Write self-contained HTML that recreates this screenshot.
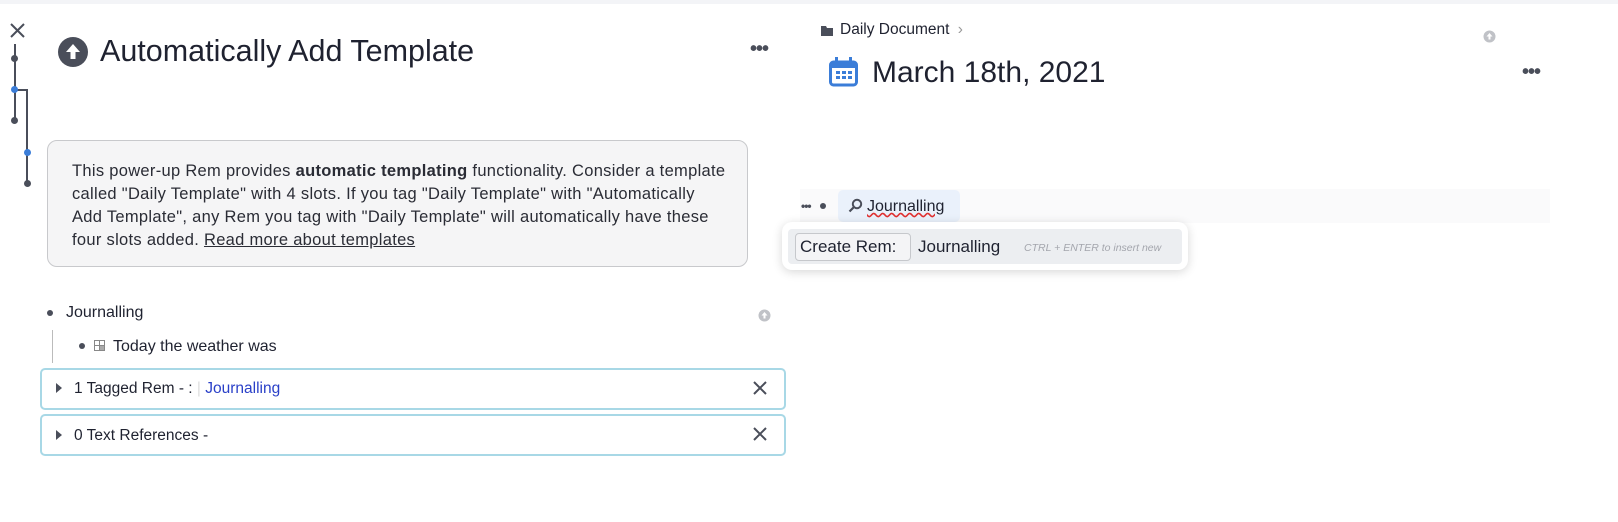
<!DOCTYPE html>
<html><head><style>
body{margin:0;width:1618px;height:522px;background:#fff;font-family:"Liberation Sans",sans-serif;color:#1f2230;position:relative;overflow:hidden}
.a{position:absolute;white-space:nowrap}
.dot{position:absolute;width:7px;height:7px;border-radius:50%;background:#4a4e5a}
.bd{position:absolute;width:7px;height:7px;border-radius:50%;background:#3b7dd8}
</style></head><body>
<div class="a" style="left:0;top:0;width:1618px;height:4px;background:#f3f4f7"></div>
<svg class="a" style="left:9px;top:22px" width="17" height="17"><path d="M2 2L15 15M15 2L2 15" stroke="#4a4e5a" stroke-width="2"/></svg>
<div class="a" style="left:14px;top:44px;width:2px;height:76px;background:#4a4e5a"></div>
<div class="a" style="left:15px;top:89px;width:12px;height:2px;background:#4a4e5a"></div>
<div class="a" style="left:26px;top:89px;width:2px;height:92px;background:#4a4e5a"></div>
<div class="dot" style="left:11px;top:55px"></div>
<div class="bd" style="left:11px;top:86px"></div>
<div class="dot" style="left:11px;top:117px"></div>
<div class="bd" style="left:24px;top:149px"></div>
<div class="dot" style="left:24px;top:180px"></div>
<svg class="a" style="left:58px;top:37px" width="30" height="30"><circle cx="15" cy="15" r="15" fill="#4a4e5a"/><path d="M15 7L8 15h4.5v7h5v-7H22z" fill="#fff"/></svg>
<div class="a" style="left:100px;top:34px;font-size:30.5px">Automatically Add Template</div>
<div class="a" style="left:750px;top:38px;font-size:20px;font-weight:bold;letter-spacing:-1px;color:#4a4e5a">•••</div>
<div class="a" style="left:47px;top:140px;width:699px;height:125px;border:1px solid #c8c9cc;border-radius:10px;background:#f5f5f6"></div>
<div class="a" style="left:72px;top:160px;font-size:16.5px;letter-spacing:.3px;line-height:23px;color:#2a2c35">This power-up Rem provides <b>automatic templating</b> functionality. Consider a template<br>called "Daily Template" with 4 slots. If you tag "Daily Template" with "Automatically<br>Add Template", any Rem you tag with "Daily Template" will automatically have these<br>four slots added. <u>Read more about templates</u></div>
<div class="dot" style="left:47px;top:310px;width:6px;height:6px"></div>
<div class="a" style="left:66px;top:304px;font-size:16px">Journalling</div>
<svg class="a" style="left:758px;top:309px" width="13" height="13"><circle cx="6.5" cy="6.5" r="6" fill="#c0c2c7"/><path d="M6.5 3L3.5 6.5h2v3h2v-3h2z" fill="#fff"/></svg>
<div class="a" style="left:52px;top:330px;width:1px;height:33px;background:#bbb"></div>
<div class="dot" style="left:79px;top:343px;width:6px;height:6px"></div>
<svg class="a" style="left:94px;top:340px" width="11" height="11"><rect x=".5" y=".5" width="10" height="10" fill="none" stroke="#888"/><path d="M5.5 0v11M0 5.5h11" stroke="#888"/><rect x="6" y="6" width="4" height="4" fill="#aaa"/></svg>
<div class="a" style="left:113px;top:338px;font-size:16px">Today the weather was</div>
<div class="a" style="left:40px;top:368px;width:742px;height:38px;border:2px solid #a8d8e6;border-radius:5px"></div>
<div class="a" style="left:56px;top:383px;width:0;height:0;border-left:6px solid #4a4e5a;border-top:5px solid transparent;border-bottom:5px solid transparent"></div>
<div class="a" style="left:74px;top:380px;font-size:15.5px">1 Tagged Rem - : <span style="color:#ddd">|</span> <span style="color:#2a40c8">Journalling</span></div>
<svg class="a" style="left:752px;top:380px" width="16" height="16"><path d="M2 2L14 14M14 2L2 14" stroke="#4a4e5a" stroke-width="2"/></svg>
<div class="a" style="left:40px;top:414px;width:742px;height:38px;border:2px solid #a8d8e6;border-radius:5px"></div>
<div class="a" style="left:56px;top:430px;width:0;height:0;border-left:6px solid #4a4e5a;border-top:5px solid transparent;border-bottom:5px solid transparent"></div>
<div class="a" style="left:74px;top:427px;font-size:15.5px">0 Text References -</div>
<svg class="a" style="left:752px;top:426px" width="16" height="16"><path d="M2 2L14 14M14 2L2 14" stroke="#4a4e5a" stroke-width="2"/></svg>

<svg class="a" style="left:821px;top:25px" width="12" height="11"><path d="M0 1h5l1 2h6v8H0z" fill="#4a4e5a"/></svg>
<div class="a" style="left:840px;top:21px;font-size:15.5px">Daily Document <span style="color:#999;margin-left:4px">›</span></div>
<svg class="a" style="left:1483px;top:30px" width="13" height="13"><circle cx="6.5" cy="6.5" r="6" fill="#c0c2c7"/><path d="M6.5 3L3.5 6.5h2v3h2v-3h2z" fill="#fff"/></svg>
<svg class="a" style="left:829px;top:57px" width="29" height="30"><rect x="1.5" y="5" width="26" height="23" rx="3" fill="none" stroke="#3b7dd8" stroke-width="3"/><rect x="1.5" y="5" width="26" height="6" fill="#3b7dd8"/><rect x="6" y="0" width="3" height="7" fill="#3b7dd8"/><rect x="20" y="0" width="3" height="7" fill="#3b7dd8"/><g fill="#3b7dd8"><rect x="7" y="14" width="4" height="3"/><rect x="13" y="14" width="4" height="3"/><rect x="19" y="14" width="4" height="3"/><rect x="7" y="19" width="4" height="3"/><rect x="13" y="19" width="4" height="3"/><rect x="19" y="19" width="4" height="3"/></g></svg>
<div class="a" style="left:872px;top:56px;font-size:30px">March 18th, 2021</div>
<div class="a" style="left:1522px;top:61px;font-size:20px;font-weight:bold;letter-spacing:-1px;color:#4a4e5a">•••</div>
<div class="a" style="left:800px;top:189px;width:750px;height:34px;background:#fafafb"></div>
<div class="a" style="left:801px;top:199px;font-size:12px;font-weight:bold;letter-spacing:-1px;color:#4a4e5a">•••</div>
<div class="dot" style="left:820px;top:203px;width:6px;height:6px"></div>
<div class="a" style="left:838px;top:190px;width:122px;height:32px;background:#eaf1fb;border-radius:5px"></div>
<svg class="a" style="left:848px;top:198px" width="15" height="15"><circle cx="9" cy="6" r="4.2" fill="none" stroke="#4a4e5a" stroke-width="2"/><path d="M6 9L1.5 13.5" stroke="#4a4e5a" stroke-width="2.2"/></svg>
<div class="a" style="left:867px;top:198px;font-size:16px;text-decoration:underline wavy #e03030">Journalling</div>
<div class="a" style="left:782px;top:222px;width:406px;height:48px;background:#fff;border-radius:10px;box-shadow:0 2px 10px rgba(0,0,0,.16)"></div>
<div class="a" style="left:788px;top:229px;width:394px;height:35px;background:#eceef1;border-radius:4px"></div>
<div class="a" style="left:795px;top:233px;height:26px;width:114px;border:1px solid #c6c8cc;border-radius:4px;background:#f4f4f6"></div>
<div class="a" style="left:800px;top:237px;font-size:17px">Create Rem:</div>
<div class="a" style="left:918px;top:237px;font-size:17px">Journalling</div>
<div class="a" style="left:1024px;top:242px;font-size:10.5px;font-style:italic;color:#a4a6ad">CTRL + ENTER to insert new</div>
</body></html>
